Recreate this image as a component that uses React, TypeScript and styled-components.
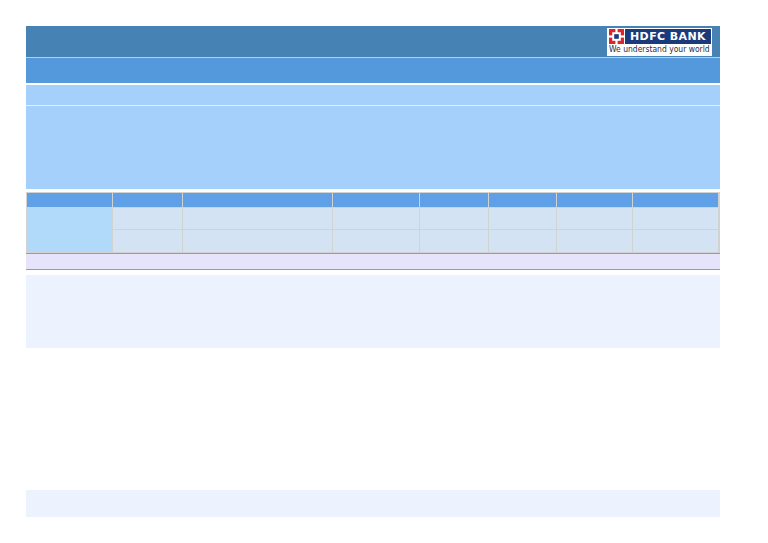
import React from 'react'
import styled, { createGlobalStyle } from 'styled-components'

const GlobalStyle = createGlobalStyle`
  html, body {
    margin: 0;
    padding: 0;
    background: #ffffff;
    font-family: 'Liberation Sans', Arial, sans-serif;
  }
`

const Page = styled.div`
  width: 694px;
  padding: 26px 0 0 26px;
  display: flex;
  flex-direction: column;
`

const Band = styled.div<{ $h: number; $bg: string; $gap?: number; $line?: string }>`
  height: ${(p) => p.$h}px;
  background: ${(p) => p.$bg};
  margin-top: ${(p) => p.$gap ?? 0}px;
  border-bottom: ${(p) => (p.$line ? `1px solid ${p.$line}` : 'none')};
`

const Header = styled.div`
  height: 31px;
  background: #4682b4;
  border-bottom: 1px solid #b5cfe6;
  display: flex;
  justify-content: flex-end;
  align-items: center;
  padding-right: 8px;
`

const Logo = styled.div`
  width: 105px;
  height: 28px;
  background: #ffffff;
  display: flex;
  flex-direction: column;
  padding: 1px 1px 0 2px;
  box-sizing: border-box;
`

const LogoTop = styled.div`
  display: flex;
  gap: 1px;
  height: 15px;
`

const BankName = styled.div`
  flex: 1;
  background: #1a3a7c;
  color: #ffffff;
  font-weight: bold;
  font-size: 11px;
  letter-spacing: 0.4px;
  display: flex;
  align-items: center;
  justify-content: center;
  font-family: 'DejaVu Sans', 'Liberation Sans', sans-serif;
`

const Tagline = styled.div`
  font-size: 8.2px;
  color: #2a2a3a;
  line-height: 11px;
  white-space: nowrap;
  font-family: 'DejaVu Sans', sans-serif;
  transform: scaleX(0.93);
  transform-origin: left center;
`

const Table = styled.div`
  margin-top: 3px;
  display: grid;
  grid-template-columns: 85px 69px 149px 86px 68px 67px 75px 1fr;
  grid-template-rows: 14px 21px 22px;
  border: 1px solid #d2d2d2;
  border-right-width: 2px;
  box-sizing: border-box;
  width: 694px;
  background: #d2d2d2;
  gap: 1px;
`

const HeadCell = styled.div`
  background: #5fa0e6;
`

const Cell = styled.div<{ $merged?: boolean }>`
  background: ${(p) => (p.$merged ? '#b1d9fa' : '#d3e3f3')};
  grid-row: ${(p) => (p.$merged ? 'span 2' : 'auto')};
`

const Notice = styled.div`
  height: 15px;
  background: #e6e4fa;
  border-top: 1px solid #7b9cea;
  border-bottom: 1px solid #7b9cea;
`

function HdfcMark() {
  return (
    <svg width="15" height="15" viewBox="0 0 15 15">
      <rect x="0" y="0" width="15" height="15" fill="#e0242a" />
      <rect x="6.4" y="0" width="2.2" height="15" fill="#ffffff" />
      <rect x="0" y="6.4" width="15" height="2.2" fill="#ffffff" />
      <rect x="3.2" y="3.2" width="8.6" height="8.6" fill="#ffffff" />
      <rect x="5.2" y="5.2" width="4.6" height="4.6" fill="#1a3a7c" />
    </svg>
  )
}

const headCols = Array.from({ length: 8 })
const bodyCols = Array.from({ length: 7 })

export default function App() {
  return (
    <>
      <GlobalStyle />
      <Page>
        <Header>
          <Logo>
            <LogoTop>
              <HdfcMark />
              <BankName>HDFC BANK</BankName>
            </LogoTop>
            <Tagline>We understand your world</Tagline>
          </Logo>
        </Header>
        <Band $h={25} $bg="#5599dd" />
        <Band $h={20} $bg="#a6d0fc" $gap={2} $line="#e0eefd" />
        <Band $h={83} $bg="#a6d0fc" />
        <Table>
          {headCols.map((_, i) => (
            <HeadCell key={`h${i}`} />
          ))}
          <Cell $merged />
          {bodyCols.map((_, i) => (
            <Cell key={`a${i}`} />
          ))}
          {bodyCols.map((_, i) => (
            <Cell key={`b${i}`} />
          ))}
        </Table>
        <Notice />
        <Band $h={73} $bg="#ecf2fe" $gap={5} />
        <Band $h={27} $bg="#ecf2fe" $gap={142} />
      </Page>
    </>
  )
}
